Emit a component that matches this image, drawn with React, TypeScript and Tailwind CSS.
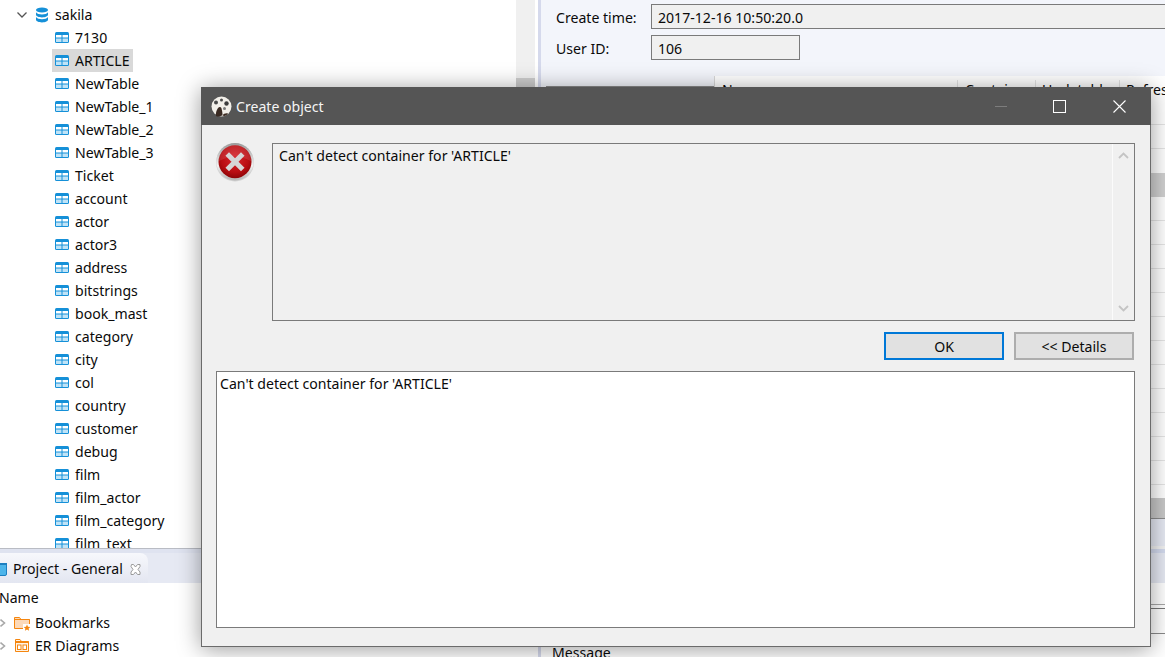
const tables = [
  "7130", "ARTICLE", "NewTable", "NewTable_1", "NewTable_2", "NewTable_3", "Ticket", "account", "actor", "actor3",
  "address", "bitstrings", "book_mast", "category", "city", "col", "country", "customer", "debug", "film",
  "film_actor", "film_category", "film_text",
]

function TableIcon() {
  return (
    <svg width="14" height="11" viewBox="0 0 14 11" className="shrink-0">
      <rect x="0" y="0" width="14" height="11" rx="1.5" fill="#1590d8" />
      <rect x="1" y="3" width="5.5" height="2.5" fill="#ffffff" />
      <rect x="7.5" y="3" width="5.5" height="2.5" fill="#ffffff" />
      <rect x="1" y="6.5" width="5.5" height="3.5" fill="#bfe3f7" />
      <rect x="7.5" y="6.5" width="5.5" height="3.5" fill="#bfe3f7" />
    </svg>
  )
}

function DatabaseIcon() {
  return (
    <svg width="14" height="16" viewBox="0 0 14 16" className="shrink-0">
      <ellipse cx="7" cy="3" rx="6" ry="2.6" fill="#1590d8" />
      <path d="M1 5.2c1 1.6 3.4 2.2 6 2.2s5-.6 6-2.2v2.6c0 1.5-2.7 2.6-6 2.6s-6-1.1-6-2.6z" fill="#1590d8" />
      <path d="M1 10c1 1.6 3.4 2.2 6 2.2s5-.6 6-2.2v2.8c0 1.5-2.7 2.6-6 2.6s-6-1.1-6-2.6z" fill="#1590d8" />
    </svg>
  )
}

function FolderStarIcon() {
  return (
    <svg width="17" height="15" viewBox="0 0 17 15" className="shrink-0">
      <path d="M.5 12.5V1.500h5l1.500 2h8.500v9z" fill="#fcd9b8" stroke="#f5860f" />
      <path d="M.5 3.500h15" stroke="#f5860f" />
      <rect x="9" y="8" width="8" height="7" fill="#ffffff" />
      <path d="M13 8.500l1 2.200 2.300.2-1.700 1.500.5 2.300-2.100-1.200-2.100 1.200.5-2.300-1.700-1.500 2.300-.2z" fill="#f5860f" />
    </svg>
  )
}

function FolderDiagramIcon() {
  return (
    <svg width="14" height="13" viewBox="0 0 14 13" className="shrink-0">
      <path d="M.5 12.500V.5h4.500l1.500 2h7v10z" fill="#fff3e4" stroke="#f5860f" />
      <path d="M.5 3h13" stroke="#f5860f" strokeWidth="2" />
      <rect x="2.500" y="6" width="3.500" height="4.500" fill="#ffffff" stroke="#f5860f" />
      <rect x="8" y="6" width="3.500" height="4.500" fill="#ffffff" stroke="#f5860f" />
    </svg>
  )
}

function GrayChevron() {
  return (
    <svg width="6" height="10" viewBox="0 0 6 10" className="shrink-0">
      <path d="M.5 1.500L4.500 5 .5 8.500" fill="none" stroke="#a8a8a8" strokeWidth="1.600" />
    </svg>
  )
}

function ErrorIcon() {
  return (
    <svg width="40" height="40" viewBox="0 0 40 40" className="shrink-0">
      <defs>
        <radialGradient id="errorFill" cx="50%" cy="40%" r="60%">
          <stop offset="0%" stopColor="#d8262c" />
          <stop offset="70%" stopColor="#b80d12" />
          <stop offset="100%" stopColor="#8e0508" />
        </radialGradient>
        <linearGradient id="errorRing" x1="0" y1="0" x2="0" y2="1">
          <stop offset="0%" stopColor="#9a9a9a" />
          <stop offset="60%" stopColor="#f2f2f2" />
          <stop offset="100%" stopColor="#b5b5b5" />
        </linearGradient>
      </defs>
      <circle cx="19" cy="19.500" r="19" fill="#000000" opacity="0.12" />
      <circle cx="19" cy="18.700" r="18.700" fill="url(#errorRing)" />
      <circle cx="19" cy="18.700" r="16.500" fill="url(#errorFill)" />
      <path d="M2.500 18.500c4-2.500 11.500-5 16.500-5s12.500 2.500 16.500 5c-.5-8.800-7.700-16.300-16.500-16.300S3 9.700 2.500 18.500z" fill="#ffffff" opacity="0.1" />
      <path d="M13 12.700l12 12M25 12.700l-12 12" stroke="#d6d6d6" strokeWidth="5" strokeLinecap="square" />
    </svg>
  )
}

function AppIcon() {
  return (
    <svg width="21" height="21" viewBox="0 0 21 21" className="shrink-0">
      <circle cx="10.500" cy="10.500" r="10" fill="#f2efe9" />
      <path d="M5 20c-.5-3 .5-6 2-8 1.500-1.500 3-1 3.500.5.500 2 1 4 1 6.500-2 1.500-4.500 2-6.500 1z" fill="#3a2a22" />
      <path d="M11.500 19.500c1-1.500 3-2.500 5.500-2-1.500 2-3.500 3-5.500 2z" fill="#3a2a22" />
      <circle cx="5" cy="6.500" r="2" fill="#4a4a4a" />
      <circle cx="10.500" cy="4" r="1.500" fill="#4a4a4a" />
      <circle cx="15.500" cy="7.500" r="2.200" fill="#3c3c3c" />
      <circle cx="13.500" cy="12.500" r="1.500" fill="#7a7a7a" />
    </svg>
  )
}

export default function App() {
  return (
    <div className="relative flex h-[657px] w-[1165px] overflow-hidden bg-white text-[14.1px] leading-[20px] text-[#0a0a0a] font-['Noto_Sans','Open_Sans',sans-serif]">
      {/* left column: database tree + project panel */}
      <div className="flex h-full w-[538px] shrink-0 flex-col">
        <div className="flex h-[548px] shrink-0 overflow-hidden">
          <div className="w-[516px] shrink-0 pt-[3px]">
            <div className="flex h-[23px] items-center">
              <svg width="10" height="6" viewBox="0 0 10 6" className="ml-[17px] shrink-0">
                <path d="M.5 .5L5 5l4.500-4.500" fill="none" stroke="#555" strokeWidth="1.300" />
              </svg>
              <div className="ml-[8px]"><DatabaseIcon /></div>
              <span className="ml-[6px]">sakila</span>
            </div>
            {tables.map((name) => (
              <div key={name} className="flex h-[23px] items-center pl-[52px]">
                <div className={`flex h-[23px] items-center gap-[6px] pl-[3px] pr-[3px] ${name === "ARTICLE" ? "bg-[#d9d9d9]" : ""}`}>
                  <TableIcon />
                  <span>{name}</span>
                </div>
              </div>
            ))}
          </div>
          <div className="w-[19px] shrink-0 bg-[#f0f0f0] pt-[78px]">
            <div className="h-[200px] bg-[#cdcdcd]" />
          </div>
        </div>
        <div className="h-[1px] shrink-0 bg-[#b9bcc4]" />
        <div className="h-[4px] shrink-0 bg-[#dfe3f0]" />
        <div className="flex h-[30px] shrink-0 bg-[#e6e9f3]">
          <div className="flex w-[148px] items-center rounded-tr-[8px] bg-gradient-to-b from-[#f7f8fc] to-[#e3e6f1] pt-[2px]">
            <svg width="7" height="13" viewBox="9 0 7 13" className="shrink-0">
              <rect x="0" y="0" width="15.500" height="12.500" rx="1.500" fill="#4db5ea" stroke="#1d7fc0" />
              <rect x="0" y="0" width="16" height="2" fill="#1d7fc0" />
            </svg>
            <span className="ml-[6px]">Project - General</span>
            <svg width="11" height="11" viewBox="0 0 11 11" className="ml-[7px] shrink-0">
              <path d="M1.500 .5h2L5.500 3l2-2.500h2.500v2L8 5.500l2 2.500v2.500H7.500L5.500 8l-2 2.500H1V8l2-2.500L1 2.500z" fill="#ffffff" stroke="#9a9a9a" />
            </svg>
          </div>
        </div>
        <div className="flex-1 bg-white">
          <div className="mt-[3px] h-[25px] leading-[23px] -ml-px">Name</div>
          <div className="flex h-[24px] items-center">
            <GrayChevron />
            <div className="ml-[8px]"><FolderStarIcon /></div>
            <span className="ml-[4px]">Bookmarks</span>
          </div>
          <div className="flex h-[21px] items-center">
            <GrayChevron />
            <div className="ml-[9px]"><FolderDiagramIcon /></div>
            <span className="ml-[6px]">ER Diagrams</span>
          </div>
        </div>
      </div>

      {/* right column: table properties behind the dialog */}
      <div className="flex h-full flex-1 flex-col border-l-[3px] border-[#d5d9ec] bg-[#f3f5fb]">
        <div className="h-[76px] shrink-0 pl-[15px] pt-[4px]">
          <div className="flex h-[25px] items-center">
            <span className="w-[95px] shrink-0 pt-[2px]">Create time:</span>
            <div className="flex h-[25px] flex-1 items-center border border-[#7a7a7a] border-r-0 bg-[#f0f0f0] pl-[6px] pt-[2px]">2017-12-16 10:50:20.0</div>
          </div>
          <div className="mt-[6px] flex h-[25px] items-center">
            <span className="w-[95px] shrink-0 pt-[2px]">User ID:</span>
            <div className="flex h-[25px] w-[149px] items-center border border-[#7a7a7a] bg-[#f0f0f0] pl-[6px] pt-[2px]">106</div>
          </div>
        </div>
        <div className="flex h-[442px] shrink-0 pl-[5px]">
          <div className="mt-[10px] h-[20px] w-[168px] shrink-0 border-t-2 border-[#8a8a8a]" />
          <div className="flex-1 bg-white">
            <div className="flex h-[25px] border-l border-[#d8d8d8] pt-[4px]">
              <div className="w-[243px] pl-[7px] border-r border-[#e3e3e3]">Name</div>
              <div className="w-[78px] pl-[7px] border-r border-[#e3e3e3]">Contains</div>
              <div className="w-[84px] pl-[6px] border-r border-[#e3e3e3]">Updatable</div>
              <div className="pl-[6px]">Refresh</div>
            </div>
            <div className="h-[24px] border-b border-[#e5e5e5]" />
            <div className="h-[24px] border-b border-[#e5e5e5]" />
            <div className="h-[24px]" />
            <div className="h-[24px] bg-[#d0d0d0]" />
            {Array.from({ length: 12 }).map((_, i) => (
              <div key={i} className="h-[24px] border-b border-[#e5e5e5]" />
            ))}
            <div className="h-[13px]" />
            <div className="h-[20px] bg-[#c8c8c8]" />
          </div>
        </div>
        <div className="h-[1px] shrink-0 bg-[#8c8c8c]" />
        <div className="h-[27px] shrink-0 bg-[#e6e9f3]" />
        <div className="h-[3px] shrink-0 bg-[#f2f2f2]" />
        <div className="h-[4px] shrink-0 bg-[#d3daee]" />
        <div className="h-[30px] shrink-0 bg-[#e6e9f3]" />
        <div className="h-[22px] shrink-0 border-b border-[#a8a8a8] bg-white" />
        <div className="h-[4px] shrink-0 border-b border-[#777] bg-white" />
        <div className="h-[25px] shrink-0 border-b border-[#8a8a8a] bg-white" />
        <div className="flex-1 bg-white pl-[11px] leading-[38px]">Message</div>
      </div>

      {/* error dialog window */}
      <div className="absolute left-[201px] top-[87px] flex h-[560px] w-[950px] flex-col border border-t-0 border-[#6b6b6b] bg-[#f0f0f0] shadow-[0_2px_22px_rgba(0,0,0,0.4)]">
        <div className="-mx-px flex h-[38px] shrink-0 items-center bg-[#555555] pl-[10px] text-[#f4f4f4]">
          <AppIcon />
          <span className="ml-[4px] pt-[2px]">Create object</span>
          <div className="ml-auto flex items-center pr-[25px]">
            <div className="h-px w-[12px] bg-[#7d7d7d]" />
            <div className="ml-[46px] h-[13px] w-[13px] border border-white" />
            <svg width="13" height="13" viewBox="0 0 13 13" className="ml-[47px]">
              <path d="M.5 .5l12 12M12.500 .5l-12 12" stroke="#ffffff" strokeWidth="1.100" />
            </svg>
          </div>
        </div>
        <div className="flex flex-1 flex-col pb-[18px] pl-[14px] pr-[15px] pt-[18px]">
          <div className="flex h-[178px] shrink-0">
            <div className="w-[56px] shrink-0"><ErrorIcon /></div>
            <div className="flex flex-1 border border-[#7a7a7a]">
              <div className="flex-1 pl-[6px] pt-[2px]">Can't detect container for 'ARTICLE'</div>
              <div className="flex w-[22px] shrink-0 flex-col items-center justify-between border-l border-[#fbfbfb] py-[8px]">
                <svg width="11" height="7" viewBox="0 0 11 7"><path d="M1 6l4.500-4.500L10 6" fill="none" stroke="#c4c4c4" strokeWidth="1.800" /></svg>
                <svg width="11" height="7" viewBox="0 0 11 7"><path d="M1 1l4.500 4.500L10 1" fill="none" stroke="#c4c4c4" strokeWidth="1.800" /></svg>
              </div>
            </div>
          </div>
          <div className="mt-[11px] flex shrink-0 justify-end gap-[10px] pr-px">
            <button className="h-[28px] w-[120px] border-2 border-[#0078d7] bg-[#e1e1e1] pt-[2px]">OK</button>
            <button className="h-[28px] w-[120px] border-2 border-[#adadad] bg-[#e1e1e1] pt-[2px]">{"<< Details"}</button>
          </div>
          <div className="mt-[11px] flex-1 border border-[#7a7a7a] bg-white pl-[3px] pt-[2px]">Can't detect container for 'ARTICLE'</div>
        </div>
      </div>
    </div>
  )
}
